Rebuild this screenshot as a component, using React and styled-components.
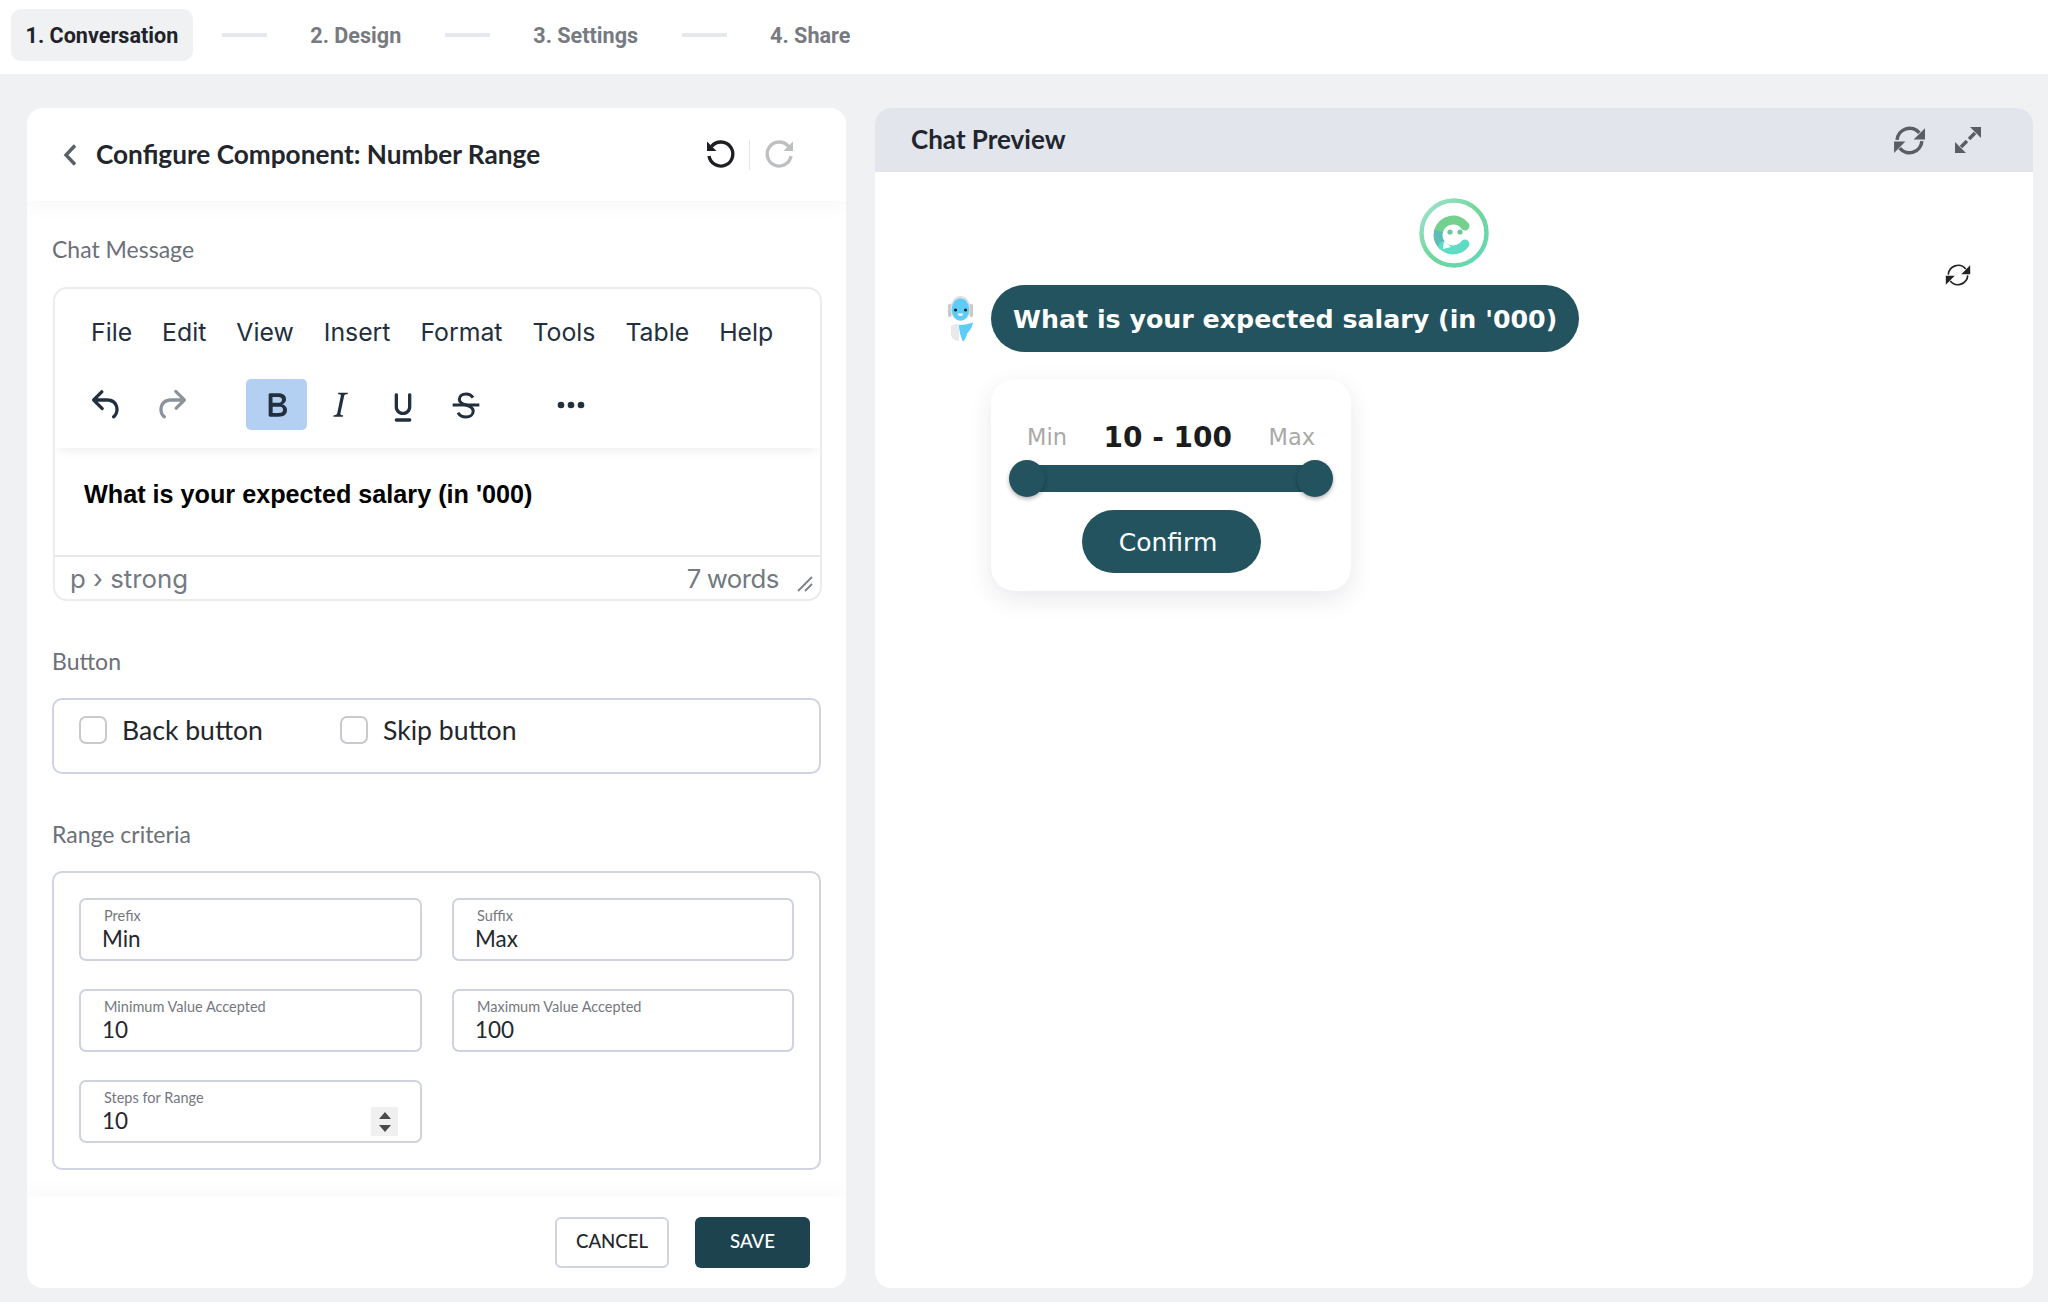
import React from "react";
import styled, { createGlobalStyle } from "styled-components";

const Global = createGlobalStyle`
  html, body { margin: 0; padding: 0; background: #f0f1f3; }
  * { box-sizing: border-box; }
  body { font-family: "Lato", "Noto Sans", sans-serif; }
`;

const Page = styled.div`
  width: 2048px; height: 1302px; display: flex; flex-direction: column; overflow: hidden; background: #f0f1f3;
`;
const TopBar = styled.nav`
  height: 74px; flex: none; background: #fff; display: flex; align-items: flex-start; padding: 9px 0 0 11px; gap: 29px;
`;
const Step = styled.div`
  height: 52px; padding: 0 14.5px; display: flex; align-items: center; border-radius: 10px;
  font: 700 21.6px "Roboto", sans-serif; white-space: nowrap;
  background: ${p => (p.$active ? "#f0f1f3" : "transparent")};
  color: ${p => (p.$active ? "#1f2329" : "#777a80")};
`;
const Dash = styled.span`
  width: 45px; height: 4px; margin-top: 24px; background: #e6e8f0; flex: none;
`;
const Main = styled.main`
  flex: 1; display: flex; gap: 29px; padding: 34px 15px 14px 27px; min-height: 0;
`;
const Card = styled.section`
  background: #fff; border-radius: 16px; overflow: hidden; display: flex; flex-direction: column;
`;
const LeftCard = styled(Card)` width: 819px; flex: none; `;
const RightCard = styled(Card)` flex: 1; `;

const CardHead = styled.header`
  height: 93px; flex: none; display: flex; align-items: center; padding: 0 50px 0 35px; position: relative; z-index: 1;
  box-shadow: 0 6px 18px rgba(0,0,0,.035);
  background: #fff;
`;
const Title = styled.h1`
  margin: 0 0 2px 18px; flex: 1; font: 700 26.2px "Lato", sans-serif; color: #22262c; white-space: nowrap;
`;
const HeadDivider = styled.span` width: 1px; height: 30px; background: #e4e4e6; margin: 0 14px 0 13px; `;

const FormBody = styled.div` flex: 1; padding: 34px 25px 0 25px; min-height: 0; `;
const Section = styled.div` margin-bottom: 46px; `;
const FieldLabel = styled.div`
  height: 30px; line-height: 28px; margin-bottom: 21px; font-size: 23px; color: #6c7078;
`;
const FirstLabel = styled(FieldLabel)` margin-bottom: 22px; `;

const Editor = styled.div`
  height: 314px; border: 2px solid #ececee; border-radius: 14px; display: flex; flex-direction: column; overflow: hidden; margin: 0 -1px 0 1px;
`;
const MenuBar = styled.div`
  height: 86px; flex: none; display: flex; align-items: center; gap: 30px; padding-left: 36px;
  font: 400 24.8px "Inter", sans-serif; color: #222f3e;
`;
const ToolBar = styled.div`
  height: 73px; flex: none; display: flex; align-items: flex-start; padding: 4px 0 0 21px;
  box-shadow: 0 6px 10px -4px rgba(0,0,0,.08); position: relative; z-index: 1; background: #fff;
`;
const ToolGroup = styled.div` display: flex; gap: ${p => p.$inner}px; margin-right: ${p => p.$gap || 0}px; `;
const Tool = styled.div`
  width: 61px; height: 51px; border-radius: 5px; display: flex; align-items: center; justify-content: center;
  background: ${p => (p.$on ? "#b3d0f3" : "transparent")};
  color: ${p => (p.$muted ? "#8b939c" : "#222f3e")};
`;
const Content = styled.div`
  flex: 1; padding: 30px 0 0 29px; font: 700 25.2px/32px "Liberation Sans", sans-serif; color: #000;
`;
const StatusBar = styled.div`
  height: 44px; flex: none; border-top: 2px solid #e8e8ea; display: flex; align-items: center; padding: 0 7px 0 15px;
  font: 400 25.8px "Inter", sans-serif; color: #737a83; position: relative;
`;
const StatusPath = styled.span` flex: 1; `;
const WordCount = styled.span` letter-spacing: -0.5px; word-spacing: -1px; `;
const Grip = styled.svg` margin-left: 18px; margin-top: 12px; `;

const Box = styled.div`
  border: 2px solid #d0d4e2; border-radius: 10px;
`;
const ChecksBox = styled(Box)`
  height: 76px; display: flex; align-items: flex-start; padding: 15px 0 0 25px;
`;
const CheckOption = styled.label`
  width: 261px; display: flex; align-items: center; gap: 15px; font-size: 26.6px; line-height: 30px; color: #23272d;
`;
const CheckMark = styled.span`
  width: 28px; height: 28px; border: 2px solid #c9cacd; border-radius: 7px; flex: none;
`;
const RangeBox = styled(Box)`
  height: 299px; padding: 25px 25px 0; display: grid; grid-template-columns: 343px 342px; column-gap: 30px; row-gap: 28px; grid-auto-rows: 63px; align-content: start;
`;
const Input = styled.div`
  border: 2px solid #cfd3e0; border-radius: 7px; padding: 7px 0 0 23px; position: relative;
`;
const InputLabel = styled.div` font-size: 14.5px; line-height: 18px; color: #74787f; `;
const InputValue = styled.div` font-size: 22.5px; line-height: 28px; color: #24282e; margin-left: -2px; `;
const Stepper = styled.div`
  position: absolute; right: 22px; top: 25px; width: 27px; height: 29px; background: #f0f0f0;
  display: flex; flex-direction: column; align-items: center; justify-content: center; gap: 6px;
`;
const Arrow = styled.span`
  width: 0; height: 0; border-left: 6.5px solid transparent; border-right: 6.5px solid transparent;
  ${p => (p.$down ? "border-top: 7px solid #4a4a4a;" : "border-bottom: 7px solid #4a4a4a;")}
`;
const Footer = styled.footer`
  height: 91px; flex: none; display: flex; justify-content: flex-end; align-items: flex-start; gap: 26px; padding: 20px 36px 0 0;
  background: #fff; box-shadow: 0 -8px 18px rgba(0,0,0,.022); position: relative;
`;
const Btn = styled.div`
  width: ${p => p.$w}px; height: 51px; padding-bottom: 3px; border-radius: 6px; display: flex; align-items: center; justify-content: center;
  font-size: 18.6px; font-weight: 500;
  background: ${p => (p.$primary ? "#1d434f" : "#fff")};
  color: ${p => (p.$primary ? "#fff" : "#23272d")};
  border: ${p => (p.$primary ? "none" : "2px solid #d0d4e2")};
`;

const PreviewHead = styled.header`
  height: 64px; flex: none; background: #e2e5ec; display: flex; align-items: center; padding: 0 50px 0 36px; gap: 27px; color: #5a5d62;
`;
const PreviewTitle = styled.h2`
  margin: 0 0 2px; flex: 1; font: 700 26px "Lato", sans-serif; color: #22262c;
`;
const Chat = styled.div`
  flex: 1; position: relative; padding-top: 26px; display: flex; flex-direction: column;
`;
const Reload = styled.div` position: absolute; top: 90px; right: 62px; color: #222; line-height: 0; `;
const Logo = styled.svg` align-self: center; flex: none; `;
const MsgRow = styled.div` display: flex; align-items: center; gap: 18px; margin: 17px 0 27px 73px; `;
const Bubble = styled.div`
  height: 67px; width: 588px; padding: 2px 0 0 22px; border-radius: 34px; background: #23535f; color: #fff;
  display: flex; align-items: center; font: 700 25.3px "DejaVu Sans", sans-serif; white-space: nowrap;
`;
const RangeCard = styled.div`
  width: 360px; height: 212px; margin-left: 116px; padding: 42px 18px 0; border-radius: 24px; background: #fff;
  box-shadow: 0 8px 24px rgba(40,40,80,.10);
`;
const RangeHead = styled.div`
  height: 32px; display: flex; align-items: center; justify-content: space-between; padding: 0 18px; margin-bottom: 7px;
`;
const RangeEnd = styled.span` font: 400 22.5px "DejaVu Sans", sans-serif; color: #a9a9a9; `;
const RangeValue = styled.span` font: 700 28px "DejaVu Sans", sans-serif; color: #1c1c1c; `;
const Slider = styled.div` height: 37px; position: relative; padding: 5px 10px; `;
const Track = styled.div` height: 27px; background: #23535f; `;
const Thumb = styled.span`
  position: absolute; top: 0; ${p => p.$side}: 0; width: 36px; height: 37px; border-radius: 50%; background: #23535f;
  box-shadow: 0 2px 4px rgba(0,0,0,.3);
`;
const ConfirmRow = styled.div` display: flex; justify-content: center; margin-top: 13px; `;
const Confirm = styled.div`
  width: 179px; height: 63px; padding: 1px 6px 0 0; border-radius: 32px; background: #23535f; color: #fff; display: flex; align-items: center; justify-content: center;
  font: 400 25px "DejaVu Sans", sans-serif;
`;

const Sync = ({ size, w = 3 }) => (
  <svg width={size} height={size} viewBox="0 0 32 32" fill="none" stroke="currentColor" strokeWidth={w}>
    <path d="M4 15.5A12.2 12.2 0 0 1 25.5 8.5" />
    <path d="M28 16.5A12.2 12.2 0 0 1 6.5 23.5" />
    <polygon points="31,4 31,15 20,15" fill="currentColor" stroke="none" />
    <polygon points="1,28 1,17 12,17" fill="currentColor" stroke="none" />
  </svg>
);
const Expand = () => (
  <svg width="30" height="30" viewBox="0 0 30 30" fill="currentColor" stroke="currentColor">
    <path d="M17 2h11v11z" stroke="none" />
    <path d="M13 28H2V17z" stroke="none" />
    <path d="M22 8l-6 6M8 22l6-6" strokeWidth="3.4" fill="none" />
  </svg>
);
const TurnBack = ({ color, flip }) => (
  <svg width="32" height="30" viewBox="0 0 32 30" fill="none" stroke={color} strokeWidth="3.4" style={flip ? { transform: "scaleX(-1)" } : undefined}>
    <path d="M7.5 6.5A12 12 0 1 1 5 16" />
    <polygon points="3,1.5 3,11 12.5,11" fill={color} stroke="none" />
  </svg>
);
const Ico = ({ d, size = 40 }) => (
  <svg width={size} height={size} viewBox="0 0 24 24" fill="currentColor"><path d={d} /></svg>
);
const UNDO = "M6.4 8H12c3.7 0 6.2 2 6.8 5.1.6 2.7-.4 5.6-2.3 6.8a1 1 0 0 1-1-1.8c1.1-.6 1.8-2.7 1.4-4.6-.5-2.1-2.1-3.5-4.9-3.5H6.4l3.3 3.3a1 1 0 1 1-1.4 1.4l-5-5a1 1 0 0 1 0-1.4l5-5a1 1 0 0 1 1.4 1.4L6.4 8Z";
const REDO = "M17.6 10H12c-2.8 0-4.4 1.4-4.9 3.5-.4 2 .3 4 1.4 4.6a1 1 0 1 1-1 1.8c-2-1.2-2.9-4.1-2.3-6.8.6-3 3-5.1 6.8-5.1h5.6l-3.3-3.3a1 1 0 1 1 1.4-1.4l5 5a1 1 0 0 1 0 1.4l-5 5a1 1 0 0 1-1.4-1.4l3.3-3.3Z";
const BOLD = "M7.8 19c-.3 0-.5 0-.6-.2l-.2-.5V5.7c0-.2 0-.4.2-.5l.6-.2h5c1.5 0 2.7.3 3.5 1 .7.6 1.1 1.4 1.1 2.5a3 3 0 0 1-.6 1.9c-.4.6-1 1-1.6 1.2.4.1.9.3 1.3.6s.8.7 1 1.2c.4.4.5 1 .5 1.6 0 1.3-.4 2.3-1.3 3-.8.7-2.1 1-3.8 1H7.8Zm5-8.3c.6 0 1.2-.1 1.6-.5.4-.3.6-.7.6-1.3 0-1.1-.8-1.7-2.3-1.7H9.3v3.5h3.4Zm.5 6c.7 0 1.3-.1 1.7-.4.4-.4.6-.9.6-1.5s-.2-1-.7-1.4c-.4-.3-1-.4-2-.4H9.4v3.8h4Z";
const ITALIC = "M16.7 4.7l-.1.9h-.3c-.6 0-1 0-1.4.3-.3.3-.4.6-.5 1.1l-2.1 9.8v.6c0 .5.4.8 1.4.8h.2l-.2.8H8l.2-.8h.2c1.1 0 1.8-.5 2-1.5l2-9.8.1-.5c0-.6-.4-.8-1.4-.8h-.3l.2-.9h5.8Z";
const UNDERLINE = "M16 5c.6 0 1 .4 1 1v7c0 2.8-2.2 5-5 5s-5-2.2-5-5V6c0-.6.4-1 1-1s1 .4 1 1v7c0 1.7 1.3 3 3 3s3-1.3 3-3V6c0-.6.4-1 1-1ZM8 20h8c.6 0 1 .4 1 1s-.4 1-1 1H8a1 1 0 1 1 0-2Z";

const Strike = () => (
  <svg width="40" height="40" viewBox="0 0 24 24" fill="none" stroke="currentColor" strokeWidth="1.8">
    <path d="M16.2 7.6C15.2 6 13.8 5.4 12 5.4c-2.4 0-4 1.3-4 3.2 0 2 1.7 2.8 4 3.4 2.7.7 4.3 1.6 4.3 3.7 0 2.1-1.8 3.5-4.3 3.5-2.1 0-3.8-.9-4.8-2.6" />
    <path d="M4 12h16" />
  </svg>
);
const Dots = () => (
  <svg width="40" height="40" viewBox="0 0 24 24" fill="currentColor">
    <circle cx="6" cy="12" r="2" /><circle cx="12" cy="12" r="2" /><circle cx="18" cy="12" r="2" />
  </svg>
);

const LogoMark = () => (
  <Logo width="70" height="70" viewBox="0 0 70 70" fill="none">
    <defs>
      <linearGradient id="ring" x1="0" y1="0" x2="1" y2="1">
        <stop offset="0" stopColor="#a5e3d2" />
        <stop offset=".5" stopColor="#6fd79a" />
        <stop offset="1" stopColor="#62d8b8" />
      </linearGradient>
    </defs>
    <circle cx="35" cy="35" r="32.5" stroke="url(#ring)" strokeWidth="4.5" />
    <path d="M46 28A15 15 0 0 0 19.6 33" stroke="#74d08f" strokeWidth="9" strokeLinecap="round" />
    <path d="M19.6 33A15 15 0 0 0 24 48" stroke="#5cbdb8" strokeWidth="9" />
    <path d="M24 48A15 15 0 0 0 46 46" stroke="#5fdcc4" strokeWidth="9" strokeLinecap="round" />
    <path d="M25 43l7 6-8 2z" fill="#fff" />
    <circle cx="31" cy="34" r="2.6" fill="#6cc79a" />
    <circle cx="41" cy="34" r="2.6" fill="#6cc79a" />
  </Logo>
);

const Bot = () => (
  <svg width="25" height="46" viewBox="0 0 25 46" style={{ flex: "none" }}>
    <rect x="0" y="8" width="3.5" height="13" rx="1.7" fill="#c9c9c9" />
    <rect x="21.5" y="8" width="3.5" height="13" rx="1.7" fill="#c9c9c9" />
    <ellipse cx="12.5" cy="12.5" rx="10" ry="12.5" fill="#dedede" />
    <ellipse cx="12.5" cy="13.5" rx="8.8" ry="11" fill="#5ccdf7" />
    <circle cx="7.5" cy="14" r="1.6" fill="#222" />
    <circle cx="17.5" cy="14" r="1.6" fill="#222" />
    <path d="M10 17.5h5a2.5 2.5 0 0 1-5 0z" fill="#fff" />
    <path d="M3 30c2.500-1.500 5-2 8-2v17c-4 0-8-2.500-8-7z" fill="#e9e9e9" />
    <path d="M11 29c5 0 9-.8 14-2.500-1 5.500-3.500 8.500-5.500 10.500-1 3.500-2.500 7-4.500 8.500-2-4-4-10.500-4-16.500z" fill="#5ccdf7" />
  </svg>
);

export default function App() {
  return (
    <Page>
      <Global />
      <TopBar>
        <Step $active>1. Conversation</Step>
        <Dash />
        <Step>2. Design</Step>
        <Dash />
        <Step>3. Settings</Step>
        <Dash />
        <Step>4. Share</Step>
      </TopBar>
      <Main>
        <LeftCard>
          <CardHead>
            <svg width="16" height="24" viewBox="0 0 16 24" fill="none" stroke="#5b5f66" strokeWidth="3.4"><path d="M13 2.5L4 12l9 9.5" /></svg>
            <Title>Configure Component: Number Range</Title>
            <TurnBack color="#1d1f22" />
            <HeadDivider />
            <TurnBack color="#bdbfc1" flip />
          </CardHead>
          <FormBody>
            <Section>
              <FirstLabel>Chat Message</FirstLabel>
              <Editor>
                <MenuBar>
                  <span>File</span><span>Edit</span><span>View</span><span>Insert</span>
                  <span>Format</span><span>Tools</span><span>Table</span><span>Help</span>
                </MenuBar>
                <ToolBar>
                  <ToolGroup $inner={3} $gap={45}>
                    <Tool><Ico d={UNDO} /></Tool>
                    <Tool $muted><Ico d={REDO} /></Tool>
                  </ToolGroup>
                  <ToolGroup $inner={2} $gap={44}>
                    <Tool $on><Ico d={BOLD} /></Tool>
                    <Tool><Ico d={ITALIC} /></Tool>
                    <Tool><Ico d={UNDERLINE} /></Tool>
                    <Tool><Strike /></Tool>
                  </ToolGroup>
                  <Tool><Dots /></Tool>
                </ToolBar>
                <Content>What is your expected salary (in '000)</Content>
                <StatusBar>
                  <StatusPath>p › strong</StatusPath>
                  <WordCount>7 words</WordCount>
                  <Grip width="16" height="16" viewBox="0 0 16 16" stroke="#7d8188" strokeWidth="1.8"><path d="M1 15L15 1M8 15l7-7" /></Grip>
                </StatusBar>
              </Editor>
            </Section>
            <Section>
              <FieldLabel>Button</FieldLabel>
              <ChecksBox>
                <CheckOption><CheckMark />Back button</CheckOption>
                <CheckOption><CheckMark />Skip button</CheckOption>
              </ChecksBox>
            </Section>
            <Section>
              <FieldLabel>Range criteria</FieldLabel>
              <RangeBox>
                <Input><InputLabel>Prefix</InputLabel><InputValue>Min</InputValue></Input>
                <Input><InputLabel>Suffix</InputLabel><InputValue>Max</InputValue></Input>
                <Input><InputLabel>Minimum Value Accepted</InputLabel><InputValue>10</InputValue></Input>
                <Input><InputLabel>Maximum Value Accepted</InputLabel><InputValue>100</InputValue></Input>
                <Input>
                  <InputLabel>Steps for Range</InputLabel><InputValue>10</InputValue>
                  <Stepper><Arrow /><Arrow $down /></Stepper>
                </Input>
              </RangeBox>
            </Section>
          </FormBody>
          <Footer>
            <Btn $w={114}>CANCEL</Btn>
            <Btn $w={115} $primary>SAVE</Btn>
          </Footer>
        </LeftCard>
        <RightCard>
          <PreviewHead>
            <PreviewTitle>Chat Preview</PreviewTitle>
            <Sync size={33} w={3.4} />
            <Expand />
          </PreviewHead>
          <Chat>
            <Reload><Sync size={26} w={2} /></Reload>
            <LogoMark />
            <MsgRow>
              <Bot />
              <Bubble>What is your expected salary (in '000)</Bubble>
            </MsgRow>
            <RangeCard>
              <RangeHead>
                <RangeEnd>Min</RangeEnd>
                <RangeValue>10 - 100</RangeValue>
                <RangeEnd>Max</RangeEnd>
              </RangeHead>
              <Slider>
                <Track />
                <Thumb $side="left" />
                <Thumb $side="right" />
              </Slider>
              <ConfirmRow><Confirm>Confirm</Confirm></ConfirmRow>
            </RangeCard>
          </Chat>
        </RightCard>
      </Main>
    </Page>
  );
}
